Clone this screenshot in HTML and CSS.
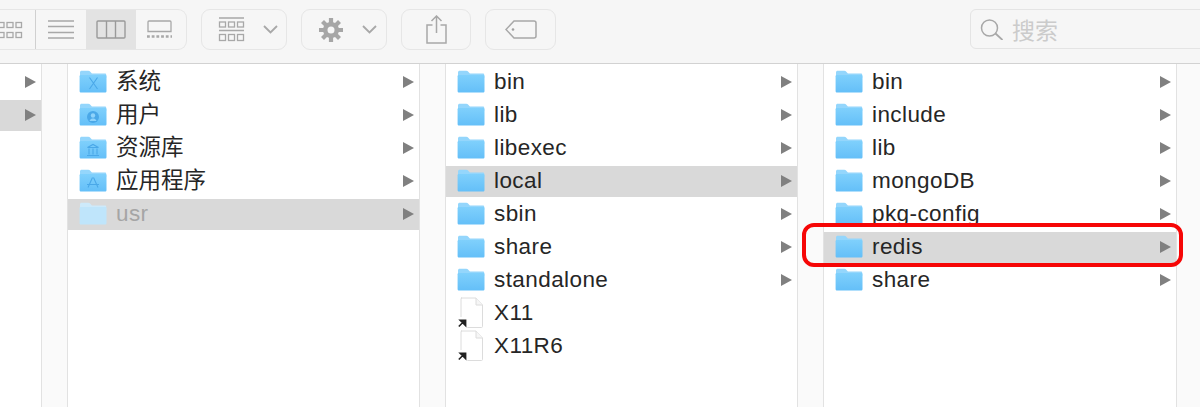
FILE: index.html
```html
<!DOCTYPE html>
<html lang="zh">
<head>
  <meta charset="UTF-8" />
  <title>Finder</title>
  <link rel="stylesheet" href="styles.css">
</head>
<body>
  <svg class="defs" width="0" height="0">
    <defs>
      <linearGradient id="front" x1="0" y1="0" x2="0" y2="1">
        <stop offset="0" stop-color="#7fd0fc" />
        <stop offset="1" stop-color="#64bff8" />
      </linearGradient>
      <symbol id="folder" viewBox="0 0 28 23">
        <path d="M1 4.500V2.500C1 1.400 1.700.8 2.700.8h6.600c.9 0 1.400.4 2 1l1.600 1.700H26c.7 0 1.200.5 1.200 1.200V8H1z" fill="#94d6fc" />
        <path d="M.6 6.200c0-.7.5-1.100 1.100-1.100h24.700c.7 0 1.100.4 1.100 1.100v14.700c0 1-.6 1.600-1.600 1.600H2.200c-1 0-1.600-.6-1.600-1.600z" fill="url(#front)" />
      </symbol>
      <symbol id="folder-dim" viewBox="0 0 28 23">
        <path d="M1 4.500V2.500C1 1.400 1.700.8 2.700.8h6.600c.9 0 1.400.4 2 1l1.600 1.700H26c.7 0 1.200.5 1.200 1.200V8H1z" fill="#cdeafb" />
        <path d="M.6 6.200c0-.7.5-1.100 1.100-1.100h24.700c.7 0 1.100.4 1.100 1.100v14.700c0 1-.6 1.600-1.600 1.600H2.200c-1 0-1.600-.6-1.600-1.600z" fill="#bfe5fb" />
      </symbol>
      <symbol id="doc" viewBox="0 0 28 32">
        <path d="M4 1h15l6.500 7V29.500c0 .6-.4 1-1 1H5c-.6 0-1-.4-1-1V2c0-.6.4-1 1-1z" fill="#fff" stroke="#dcdcdc" />
        <path d="M19 1v7h6.500" fill="#f6f6f6" stroke="#dcdcdc" />
        <rect x="0" y="20" width="11" height="11" rx="2" fill="#fff" />
        <path d="M1.800 29.500 6.500 24.800M3.200 23.200h5.400v5.400z" fill="#222" stroke="#222" stroke-width="1.600" />
      </symbol>
    </defs>
  </svg>

  <div class="toolbar">
    <div class="seg-group">
      <div class="seg seg-first">
        <svg class="ic" width="26" height="18" viewBox="0 0 26 18"><g fill="none" stroke="#a8a8a8" stroke-width="1.300"><rect x="1" y="1.500" width="6" height="5" /><rect x="10" y="1.500" width="6" height="5" /><rect x="19" y="1.500" width="5.500" height="5" /><rect x="1" y="11.500" width="6" height="5" /><rect x="10" y="11.500" width="6" height="5" /><rect x="19" y="11.500" width="5.500" height="5" /></g></svg>
      </div>
      <div class="seg">
        <svg class="ic" width="27" height="19" viewBox="0 0 27 19"><path d="M0 1h26M0 6.500h26M0 12.500h26M0 18h26" stroke="#a8a8a8" stroke-width="1.400" /></svg>
      </div>
      <div class="seg seg-on">
        <svg class="ic" width="30" height="19" viewBox="0 0 30 19"><path d="M1 2c0-.6.4-1 1-1h26c.6 0 1 .4 1 1v15c0 .6-.4 1-1 1H2c-.6 0-1-.4-1-1zM10.500 1v17M19.500 1v17" fill="none" stroke="#9a9a9a" stroke-width="1.400" /></svg>
      </div>
      <div class="seg seg-gallery">
        <svg class="ic" width="27" height="19" viewBox="0 0 27 19"><path d="M2 2c0-.6.400-1 1-1h21c.6 0 1 .4 1 1v9.500H2z" fill="none" stroke="#a8a8a8" stroke-width="1.300" /><path d="M1 16.500h25" stroke="#a8a8a8" stroke-width="2.600" stroke-dasharray="2.800 1.900" /></svg>
      </div>
    </div>

    <div class="btn btn-drop">
      <svg class="ic" width="27" height="25" viewBox="0 0 27 25"><path d="M1 1h25M1 13.500h25" stroke="#a8a8a8" stroke-width="1.300" /><g fill="none" stroke="#a8a8a8" stroke-width="1.300"><rect x="1.500" y="5" width="6" height="5" /><rect x="10.500" y="5" width="6" height="5" /><rect x="19.500" y="5" width="6" height="5" /><rect x="1.500" y="17.500" width="6" height="6" /><rect x="10.500" y="17.500" width="6" height="6" /><rect x="19.500" y="17.500" width="6" height="6" /></g></svg>
      <svg class="chev" width="15" height="9" viewBox="0 0 15 9"><path d="M1 1l6.500 6.500L14 1" fill="none" stroke="#a8a8a8" stroke-width="1.800" /></svg>
    </div>

    <div class="btn btn-drop">
      <svg class="ic" width="26" height="26" viewBox="0 0 26 26"><g stroke="#a6a6a6" stroke-width="4.200"><path d="M13 1v24M1 13h24M4.500 4.500l17 17M21.500 4.500l-17 17" /></g><circle cx="13" cy="13" r="8" fill="#a6a6a6" /><circle cx="13" cy="13" r="3.500" fill="#f6f6f6" /></svg>
      <svg class="chev" width="15" height="9" viewBox="0 0 15 9"><path d="M1 1l6.500 6.500L14 1" fill="none" stroke="#a8a8a8" stroke-width="1.800" /></svg>
    </div>

    <div class="btn btn-share">
      <svg class="ic" width="21" height="29" viewBox="0 0 21 29"><path d="M6.500 10H1v18h19V10h-5.500M10.500 18V1.500M5.500 6l5-5 5 5" fill="none" stroke="#a8a8a8" stroke-width="1.500" /></svg>
    </div>

    <div class="btn btn-tag">
      <svg class="ic" width="32" height="19" viewBox="0 0 32 19"><path d="M9 1h20c1.200 0 2 .8 2 2v13c0 1.200-.8 2-2 2H9L1 9.500z" fill="none" stroke="#a8a8a8" stroke-width="1.500" /><circle cx="8" cy="9.500" r="1.300" fill="#a0a0a0" /></svg>
    </div>

    <div class="search">
      <svg class="ic" width="23" height="21" viewBox="0 0 23 21"><circle cx="9.500" cy="9" r="8" fill="none" stroke="#a8a8a8" stroke-width="1.500" /><path d="M15.500 14.500l7 6.500" stroke="#a8a8a8" stroke-width="1.800" /></svg>
      <span class="search-text">搜索</span>
    </div>
  </div>

  <div class="browser">
    <div class="col col-root">
      <div class="row"><span class="arrow"></span></div>
      <div class="row row-sel"><span class="arrow"></span></div>
    </div>

    <div class="col">
      <div class="row">
        <svg class="icon" viewBox="0 0 28 23"><use href="#folder" /><path d="M10.500 7.500l8 11.500M18.500 7.500l-8 11.500" stroke="#4aa8e8" stroke-width="1.100" /></svg>
        <span class="name name-zh">系统</span><span class="arrow"></span>
      </div>
      <div class="row">
        <svg class="icon" viewBox="0 0 28 23"><use href="#folder" /><circle cx="14" cy="14" r="6" fill="#4aa8e8" /><circle cx="14" cy="12.500" r="2.200" fill="#8fd3fb" /><path d="M10.500 18c.8-2 2-2.500 3.500-2.500s2.700.5 3.500 2.500" fill="#8fd3fb" /></svg>
        <span class="name name-zh">用户</span><span class="arrow"></span>
      </div>
      <div class="row">
        <svg class="icon" viewBox="0 0 28 23"><use href="#folder" /><path d="M8.500 11.500L14 8.500l5.500 3zM10 12.500v6M14 12.500v6M18 12.500v6M8 19.500h12" fill="none" stroke="#4aa8e8" stroke-width="1.100" /></svg>
        <span class="name name-zh">资源库</span><span class="arrow"></span>
      </div>
      <div class="row">
        <svg class="icon" viewBox="0 0 28 23"><use href="#folder" /><path d="M14.500 8.500l4.500 10M13.500 8.500l-4.500 10M8 15.500h12" fill="none" stroke="#4aa8e8" stroke-width="1.100" /></svg>
        <span class="name name-zh">应用程序</span><span class="arrow"></span>
      </div>
      <div class="row row-sel row-dim">
        <svg class="icon" viewBox="0 0 28 23"><use href="#folder-dim" /></svg>
        <span class="name">usr</span><span class="arrow"></span>
      </div>
    </div>

    <div class="col">
      <div class="row"><svg class="icon" viewBox="0 0 28 23"><use href="#folder" /></svg><span class="name">bin</span><span class="arrow"></span></div>
      <div class="row"><svg class="icon" viewBox="0 0 28 23"><use href="#folder" /></svg><span class="name">lib</span><span class="arrow"></span></div>
      <div class="row"><svg class="icon" viewBox="0 0 28 23"><use href="#folder" /></svg><span class="name">libexec</span><span class="arrow"></span></div>
      <div class="row row-sel"><svg class="icon" viewBox="0 0 28 23"><use href="#folder" /></svg><span class="name">local</span><span class="arrow"></span></div>
      <div class="row"><svg class="icon" viewBox="0 0 28 23"><use href="#folder" /></svg><span class="name">sbin</span><span class="arrow"></span></div>
      <div class="row"><svg class="icon" viewBox="0 0 28 23"><use href="#folder" /></svg><span class="name">share</span><span class="arrow"></span></div>
      <div class="row"><svg class="icon" viewBox="0 0 28 23"><use href="#folder" /></svg><span class="name">standalone</span><span class="arrow"></span></div>
      <div class="row"><svg class="icon icon-doc" viewBox="0 0 28 32"><use href="#doc" /></svg><span class="name">X11</span></div>
      <div class="row"><svg class="icon icon-doc" viewBox="0 0 28 32"><use href="#doc" /></svg><span class="name">X11R6</span></div>
    </div>

    <div class="col">
      <div class="row"><svg class="icon" viewBox="0 0 28 23"><use href="#folder" /></svg><span class="name">bin</span><span class="arrow"></span></div>
      <div class="row"><svg class="icon" viewBox="0 0 28 23"><use href="#folder" /></svg><span class="name">include</span><span class="arrow"></span></div>
      <div class="row"><svg class="icon" viewBox="0 0 28 23"><use href="#folder" /></svg><span class="name">lib</span><span class="arrow"></span></div>
      <div class="row"><svg class="icon" viewBox="0 0 28 23"><use href="#folder" /></svg><span class="name">mongoDB</span><span class="arrow"></span></div>
      <div class="row"><svg class="icon" viewBox="0 0 28 23"><use href="#folder" /></svg><span class="name">pkg-config</span><span class="arrow"></span></div>
      <div class="row row-sel"><svg class="icon" viewBox="0 0 28 23"><use href="#folder" /></svg><span class="name">redis</span><span class="arrow"></span></div>
      <div class="row"><svg class="icon" viewBox="0 0 28 23"><use href="#folder" /></svg><span class="name">share</span><span class="arrow"></span></div>
    </div>

    <div class="highlight"></div>
  </div>
</body>
</html>
```

FILE: styles.css
```css
html, body {
  height: 100%;
}

body {
  margin: 0;
  overflow: hidden;
  font-family: "Liberation Sans", "Noto Sans CJK SC", sans-serif;
  background: #fff;
  color: #262626;
}

.defs {
  position: absolute;
}

.ic {
  display: block;
}

/* toolbar */
.toolbar {
  display: flex;
  align-items: flex-start;
  gap: 14px;
  height: 64px;
  box-sizing: border-box;
  padding-top: 9px;
  background: #f6f6f6;
  border-bottom: 1px solid #d2d2d2;
}

.seg-group {
  display: flex;
  height: 41px;
  margin-left: -15px;
  box-sizing: border-box;
  border: 1px solid #e6e6e6;
  border-left: none;
  border-radius: 0 9px 9px 0;
  overflow: hidden;
}

.seg {
  display: flex;
  align-items: center;
  justify-content: center;
  width: 50px;
}

.seg-first {
  width: 50px;
  flex: none;
  border-right: 1px solid #d0d0d0;
}

.seg-on {
  background: #e3e3e3;
}

.seg-gallery {
  padding-right: 4px;
  box-sizing: border-box;
}

.btn {
  display: flex;
  align-items: center;
  justify-content: center;
  height: 41px;
  box-sizing: border-box;
  border: 1px solid #e6e6e6;
  border-radius: 9px;
}

.btn-drop {
  width: 86px;
  gap: 18px;
  padding-left: 7px;
}

.btn-share {
  width: 70px;
}

.btn-tag {
  width: 71px;
}

.search {
  display: flex;
  align-items: center;
  gap: 9px;
  width: 240px;
  height: 40px;
  margin-left: auto;
  margin-right: -10px;
  padding-left: 9px;
  box-sizing: border-box;
  border: 1px solid #e4e4e4;
  border-radius: 6px;
}

.search-text {
  font-family: "Noto Sans CJK SC", sans-serif;
  font-size: 23px;
  line-height: 1;
  color: #cbcbcb;
}

/* column browser */
.browser {
  position: relative;
  display: grid;
  grid-template-columns: 41px 351px 351px 352px;
  column-gap: 27px;
  height: 343px;
  padding-right: 24px;
  box-sizing: border-box;
  overflow: hidden;
  background: #fafafa;
}

.col {
  padding-top: 2px;
  background: #fff;
  box-shadow: 1px 0 0 #e2e2e2, -1px 0 0 #e2e2e2;
}

.col-root {
  box-shadow: 1px 0 0 #e2e2e2;
}

.row {
  display: flex;
  align-items: center;
  height: 33px;
  box-sizing: border-box;
  padding-left: 11px;
  padding-bottom: 2px;
  border-block: 1px solid transparent;
  background-clip: border-box;
  font-size: 22.500px;
  letter-spacing: .42px;
}

.row-sel {
  background-color: #d9d9d9;
  background-clip: padding-box;
}

.row-dim .name {
  color: #a5a5a5;
}

.icon {
  flex: none;
  width: 28px;
  height: 23px;
}

.icon-doc {
  height: 32px;
}

.name {
  flex: 1;
  margin-left: 9px;
  white-space: nowrap;
}

.name-zh {
  font-family: "Noto Sans CJK SC", sans-serif;
  line-height: 1;
  letter-spacing: 0;
  padding-bottom: 4px;
}

.arrow {
  flex: none;
  width: 0;
  height: 0;
  margin-right: 5px;
  border-left: 11px solid #808080;
  border-top: 6px solid transparent;
  border-bottom: 6px solid transparent;
}

.col-root .row {
  justify-content: flex-end;
  padding-left: 0;
}

/* red annotation around the redis row */
.highlight {
  position: absolute;
  left: 802px;
  top: 159px;
  width: 381px;
  height: 44px;
  box-sizing: border-box;
  border: 4.500px solid #f60606;
  border-radius: 12px;
}
```
